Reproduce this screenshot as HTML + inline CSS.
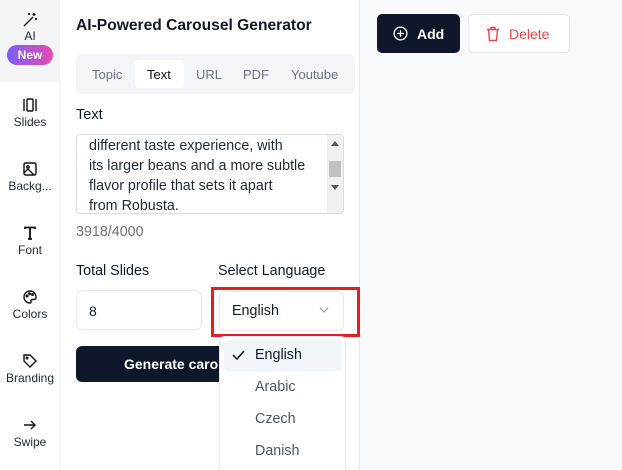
<!DOCTYPE html>
<html><head><meta charset="utf-8"><style>
*{box-sizing:border-box;margin:0;padding:0}
html,body{width:622px;height:470px;overflow:hidden}
body{font-family:"Liberation Sans",sans-serif;background:#f8f9fb;position:relative;color:#111827}
.side{position:absolute;left:0;top:0;width:60px;height:470px;background:#fff;border-right:1px solid #eef0f3}
.it{position:absolute;left:0;width:60px;text-align:center;font-size:12px;color:#1f2937}
.it svg{display:block;margin:0 auto 2px}
.panel{position:absolute;left:60px;top:0;width:300px;height:470px;background:#fff;border-right:1px solid #e5e7eb}
.a{position:absolute}
</style></head><body>
<div class="side">
 <div class="a" style="left:0;top:0;width:60px;height:82px;background:#f3f4f6"></div>
 <div class="it" style="top:12px">
  <svg width="16" height="16" viewBox="0 0 16 16" fill="none" stroke="#111" stroke-width="1.3"><path d="M2 14L11 5M12 1v3M10.5 2.5h3M14 6v2M13 7h2M7 1v2M6 2h2"/></svg>
  <div style="margin-top:-1px">AI</div>
  <div style="margin:2px auto 0;width:46px;height:20px;border-radius:10px;background:linear-gradient(90deg,#7c5cf5,#e64bb0);color:#fff;font-weight:bold;font-size:12px;line-height:20px">New</div>
 </div>
 <div class="it" style="top:97px"><svg width="16" height="16" viewBox="0 0 16 16" fill="none" stroke="#111" stroke-width="1.4"><path d="M2 2v12M14 2v12"/><rect x="5" y="2" width="6" height="12" rx="1"/></svg>Slides</div>
 <div class="it" style="top:161px"><svg width="16" height="16" viewBox="0 0 16 16" fill="none" stroke="#111" stroke-width="1.4"><rect x="2" y="2" width="12" height="12" rx="1.5"/><circle cx="6" cy="6" r="1.2"/><path d="M2 12l4-4 6 6"/></svg>Backg...</div>
 <div class="it" style="top:225px"><svg width="16" height="16" viewBox="0 0 16 16" fill="none" stroke="#111" stroke-width="1.8"><path d="M3 4V2.5h10V4M8 2.5V14M6 14h4"/></svg>Font</div>
 <div class="it" style="top:289px"><svg width="16" height="16" viewBox="0 0 16 16" fill="none" stroke="#111" stroke-width="1.4"><path d="M8 2a6 6 0 100 12c1 0 1.3-.8 1-1.5-.4-1 .2-2 1.3-2H12a2 2 0 002-2C14 4.5 11.3 2 8 2z"/><circle cx="5" cy="7" r=".8"/><circle cx="7.5" cy="4.8" r=".8"/><circle cx="10.5" cy="5.5" r=".8"/></svg>Colors</div>
 <div class="it" style="top:353px"><svg width="16" height="16" viewBox="0 0 16 16" fill="none" stroke="#111" stroke-width="1.4"><path d="M2 2h6l6 6-6 6-6-6z"/><circle cx="5" cy="5" r=".8"/></svg>Branding</div>
 <div class="it" style="top:417px"><svg width="16" height="16" viewBox="0 0 16 16" fill="none" stroke="#111" stroke-width="1.4"><path d="M2 8h11M9 4l4 4-4 4"/></svg>Swipe</div>
</div>
<div class="panel">
 <div class="a" style="left:16px;top:17px;font-size:15.6px;font-weight:bold">AI-Powered Carousel Generator</div>
 <div class="a" style="left:16px;top:54px;width:279px;height:40px;background:#f3f5f8;border-radius:6px"></div>
 <div class="a" style="left:75px;top:60px;width:49px;height:28px;background:#fff;border-radius:4px"></div>
 <div class="a" style="left:32px;top:67px;font-size:13px;color:#6b7280">Topic</div>
 <div class="a" style="left:87px;top:67px;font-size:13px;color:#111">Text</div>
 <div class="a" style="left:136px;top:67px;font-size:13px;color:#6b7280">URL</div>
 <div class="a" style="left:183px;top:67px;font-size:13px;color:#6b7280">PDF</div>
 <div class="a" style="left:231px;top:67px;font-size:13px;color:#6b7280">Youtube</div>
 <div class="a" style="left:16px;top:107px;font-size:14.5px">Text</div>
 <div class="a" style="left:16px;top:134px;width:268px;height:80px;border:1px solid #d9dde3;border-radius:4px;overflow:hidden">
  <div style="position:absolute;left:12px;top:1px;font-size:14.3px;line-height:20px;color:#1f2937;width:250px">different taste experience, with<br>its larger beans and a more subtle<br>flavor profile that sets it apart<br>from Robusta.</div>
  <div style="position:absolute;right:0;top:0;width:16px;height:80px;background:#f1f1f1"></div>
  <div style="position:absolute;right:2px;top:26px;width:12px;height:16px;background:#c1c1c1"></div>
  <div style="position:absolute;right:4px;top:6px;border:4px solid transparent;border-bottom:5px solid #555;border-top:0"></div>
  <div style="position:absolute;right:4px;top:50px;border:4px solid transparent;border-top:5px solid #555;border-bottom:0"></div>
 </div>
 <div class="a" style="left:16px;top:224px;font-size:14.3px;color:#6b7280">3918/4000</div>
 <div class="a" style="left:16px;top:263px;font-size:14.3px">Total Slides</div>
 <div class="a" style="left:158px;top:263px;font-size:14.3px">Select Language</div>
 <div class="a" style="left:16px;top:290px;width:126px;height:40px;border:1px solid #e5e7eb;border-radius:6px;font-size:14px;padding:12px 12px">8</div>
 <div class="a" style="left:16px;top:346px;width:160px;height:36px;background:#0f172a;border-radius:6px;color:#fff;font-weight:bold;font-size:14px;padding:10px 0 0 48px;white-space:nowrap;overflow:hidden">Generate caro</div>
</div>
<div class="a" style="left:211px;top:287px;width:149px;height:50px;border:3px solid #e21e23"></div>
<div class="a" style="left:219px;top:291px;width:125px;height:40px;border:1px solid #e5e7eb;border-radius:6px;background:#fff;font-size:14.3px;padding:11px 12px">English
 <svg style="position:absolute;right:14px;top:15px" width="10" height="7" viewBox="0 0 10 7" fill="none" stroke="#9ca3af" stroke-width="1.3"><path d="M1 1l4 4 4-4"/></svg></div>
<div class="a" style="left:219px;top:336px;width:127px;height:140px;background:#fff;border:1px solid #e5e7eb;border-radius:5px">
 <div class="a" style="left:4px;top:3px;width:118px;height:31px;background:#f1f4f8;border-radius:4px"></div>
 <svg class="a" style="left:12px;top:13px" width="13" height="10" viewBox="0 0 13 10" fill="none" stroke="#111" stroke-width="1.5"><path d="M1 5l4 4 7-8"/></svg>
 <div class="a" style="left:35px;top:10px;font-size:14.3px">English</div>
 <div class="a" style="left:35px;top:42px;font-size:14.3px;color:#4b5563">Arabic</div>
 <div class="a" style="left:35px;top:74px;font-size:14.3px;color:#4b5563">Czech</div>
 <div class="a" style="left:35px;top:106px;font-size:14.3px;color:#4b5563">Danish</div>
</div>
<div class="a" style="left:377px;top:14px;width:83px;height:39px;background:#0f172a;border-radius:5px;color:#fff;font-weight:bold;font-size:14px">
 <svg class="a" style="left:16px;top:12px" width="15" height="15" viewBox="0 0 16 16" fill="none" stroke="#fff" stroke-width="1.4"><circle cx="8" cy="8" r="6.8"/><path d="M8 4.5v7M4.5 8h7"/></svg>
 <span class="a" style="left:40px;top:12px">Add</span></div>
<div class="a" style="left:468px;top:14px;width:102px;height:39px;background:#fff;border:1px solid #e5e7eb;border-radius:5px;color:#ef4444;font-size:14px">
 <svg class="a" style="left:17px;top:11px" width="14" height="16" viewBox="0 0 14 16" fill="none" stroke="#ef4444" stroke-width="1.4"><path d="M1 3.5h12M5 3.5V1.5h4v2M2.5 3.5l1 11h7l1-11"/></svg>
 <span class="a" style="left:40px;top:11px">Delete</span></div>
</body></html>
